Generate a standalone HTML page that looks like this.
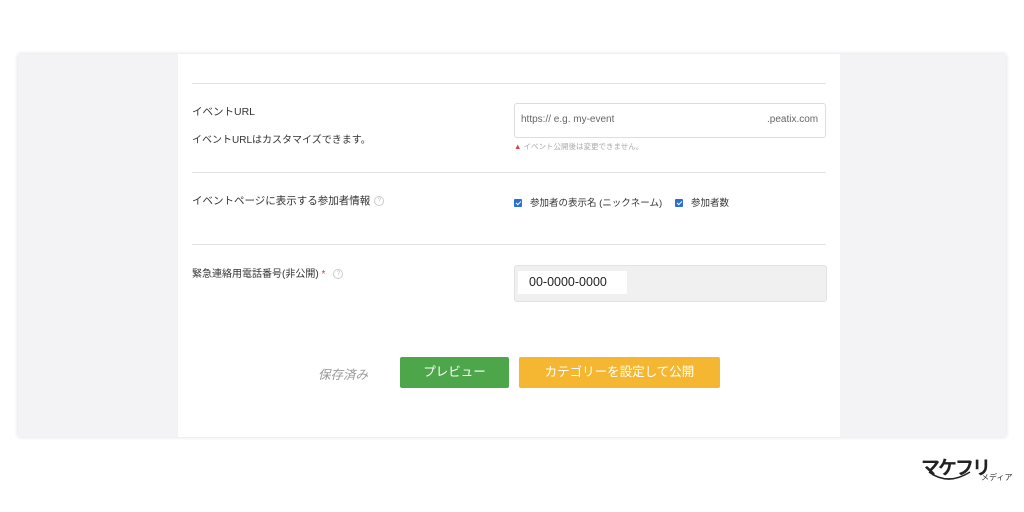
<!DOCTYPE html>
<html><head><meta charset="utf-8"><style>
body{margin:0;width:1024px;height:512px;background:#fff;position:relative;overflow:hidden;font-family:"Liberation Sans","Noto Sans CJK JP",sans-serif;color:#333}
.bg{position:absolute;left:18px;top:54px;width:988px;height:383px;background:#f3f3f5;box-shadow:0 0 4px rgba(0,0,0,.15)}
.card{position:absolute;left:178px;top:54px;width:662px;height:383px;background:#fff}
.hr{position:absolute;left:14px;width:634px;height:1px;background:#e2e2e2}
.t{position:absolute;font-size:10.5px;white-space:nowrap}
.q{display:inline-block;width:8px;height:8px;border:1px solid #ccc;border-radius:50%;font-size:6px;color:#bbb;text-align:center;line-height:8px;vertical-align:2px;margin-left:4px}
.cb{display:inline-block;width:8px;height:8px;background:#2a6fd6;border-radius:1px;vertical-align:-1px;margin-right:8px;position:relative}
.cb:after{content:"";position:absolute;left:2.5px;top:0.5px;width:2px;height:4px;border:solid #fff;border-width:0 1.3px 1.3px 0;transform:rotate(45deg)}
.btn{position:absolute;top:303px;height:31px;border-radius:2px;color:#fff;font-size:12.5px;text-align:center;line-height:31px}
</style></head><body>
<div class="bg"></div>
<div class="card">
<div class="hr" style="top:29px"></div>
<div class="t" style="left:14px;top:50px">イベントURL</div>
<div class="t" style="left:14px;top:77px;font-size:10px">イベントURLはカスタマイズできます。</div>
<div style="position:absolute;left:336px;top:49px;width:310px;height:33px;border:1px solid #ddd;border-radius:3px"></div>
<div class="t" style="left:343px;top:60px;font-size:10px;color:#666">https:// e.g. my-event</div>
<div class="t" style="left:589px;top:60px;font-size:10px;color:#666">.peatix.com</div>
<div class="t" style="left:336px;top:87px;font-size:7.5px;color:#aaa"><span style="color:#c44">▲</span> イベント公開後は変更できません。</div>
<div class="hr" style="top:118px"></div>
<div class="t" style="left:14px;top:139px">イベントページに表示する参加者情報<span class="q">?</span></div>
<div class="t" style="left:336px;top:141px;font-size:9.5px"><span class="cb"></span>参加者の表示名 (ニックネーム)</div>
<div class="t" style="left:497px;top:141px;font-size:9.5px"><span class="cb"></span>参加者数</div>
<div class="hr" style="top:190px"></div>
<div class="t" style="left:14px;top:211px;font-size:10px">緊急連絡用電話番号(非公開) <span style="color:#d33">*</span><span class="q" style="margin-left:8px">?</span></div>
<div style="position:absolute;left:336px;top:211px;width:311px;height:35px;background:#f0f0f0;border:1px solid #e2e2e2;border-radius:3px"></div>
<div class="t" style="left:340px;top:217px;width:109px;height:23px;background:#fff"></div>
<div class="t" style="left:351px;top:221px;font-size:12.5px;color:#222">00-0000-0000</div>
<div class="t" style="left:140px;top:310px;font-size:12.5px;color:#999;font-style:italic">保存済み</div>
<div class="btn" style="left:222px;width:109px;background:#4ea64a">プレビュー</div>
<div class="btn" style="left:341px;width:201px;background:#f5b731">カテゴリーを設定して公開</div>
</div>
<div class="t" style="left:921px;top:453px;font-size:19px;font-weight:bold;color:#222;letter-spacing:-2px">マケフリ</div>
<svg style="position:absolute;left:926px;top:470px" width="48" height="14"><path d="M3 2 Q22 16 44 2" stroke="#222" stroke-width="1.6" fill="none"/></svg>
<div class="t" style="left:981px;top:472px;font-size:8px;color:#333">メディア</div>
</body></html>
